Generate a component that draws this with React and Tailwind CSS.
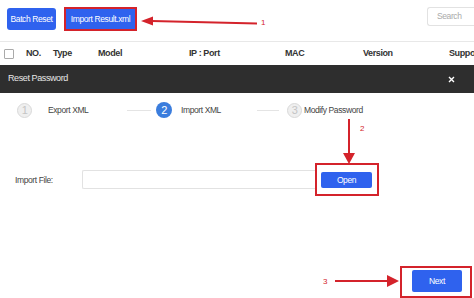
import React from 'react';

const font = { fontFamily: '"Liberation Sans", Arial, sans-serif' };

function StepCircle({ n, active }) {
    return (
        <div
            className={
                active
                    ? 'w-[16px] h-[16px] shrink-0 rounded-full bg-[#3b7ddd] text-white flex items-center justify-center text-[11px]'
                    : 'w-[15px] h-[15px] shrink-0 rounded-full bg-[#efefef] border border-[#d9d9d9] text-[#c4c4c4] flex items-center justify-center text-[11px]'
            }
        >
            {n}
        </div>
    );
}

function App() {
    const cols = [
        { label: 'NO.', w: 'w-[27px]' },
        { label: 'Type', w: 'w-[45px]' },
        { label: 'Model', w: 'w-[91px]' },
        { label: 'IP : Port', w: 'w-[96px]' },
        { label: 'MAC', w: 'w-[78px]' },
        { label: 'Version', w: 'w-[86px]' },
        { label: 'Support', w: 'w-[40px]' },
    ];

    return (
        <div className="relative w-[474px] h-[298px] overflow-hidden bg-white text-[8.5px] tracking-[-0.4px] text-[#333]" style={font}>
            {/* toolbar */}
            <div className="flex items-start h-[42px] border-b border-[#e8e8e8] pl-[7px] pt-[7px]">
                <button className="w-[49px] h-[22px] mt-[1px] rounded-[3px] bg-[#2f62ee] text-white">Batch Reset</button>
                <div className="ml-[8px] w-[73px] h-[24px] border-2 border-[#d4232b] flex">
                    <button className="flex-1 bg-[#2f62ee] text-white">Import Result.xml</button>
                </div>
                <div className="ml-auto w-[47px] h-[19px] border border-r-0 border-[#e2e2e2] rounded-l-[3px] pl-[9px] flex items-center text-[#aaa]">Search</div>
            </div>

            {/* table header */}
            <div className="flex items-center h-[23px] font-bold text-[9px] text-[#333] whitespace-nowrap overflow-hidden">
                <div className="w-[26px] shrink-0 pl-[4px]">
                    <div className="w-[10px] h-[10px] border border-[#aaa] rounded-[1px] bg-white"></div>
                </div>
                {cols.map(c => (
                    <div key={c.label} className={c.w + ' shrink-0'}>{c.label}</div>
                ))}
            </div>

            {/* dialog header */}
            <div className="flex items-center justify-between h-[28px] bg-[#2e2e2e] pl-[8px] pr-[19px]">
                <span className="text-[#e8e8e8] text-[9px]">Reset Password</span>
                <svg width="7" height="7" viewBox="0 0 7 7">
                    <path d="M1 1 L6 6 M6 1 L1 6" stroke="#fff" strokeWidth="1.4" />
                </svg>
            </div>

            {/* steps */}
            <div className="flex items-center h-[34px] pl-[17px] text-[#444] whitespace-nowrap">
                <StepCircle n="1" />
                <div className="ml-[16px] w-[79px] shrink-0">Export XML</div>
                <div className="w-[24px] h-px shrink-0 bg-[#e4e4e4]"></div>
                <div className="ml-[5px]"><StepCircle n="2" active /></div>
                <div className="ml-[9px] w-[76px] shrink-0">Import XML</div>
                <div className="w-[22px] h-px shrink-0 bg-[#e4e4e4]"></div>
                <div className="ml-[8px]"><StepCircle n="3" /></div>
                <div className="ml-[2px]">Modify Password</div>
            </div>

            {/* import file row */}
            <div className="flex items-center h-[33px] mt-[36px] text-[#444]">
                <div className="w-[82px] shrink-0 pl-[15px] pt-[2px]">Import File:</div>
                <div className="w-[233px] shrink-0 h-[19px] border border-r-0 border-[#e2e2e2] rounded-l-[2px]"></div>
                <div className="w-[64px] shrink-0 h-[33px] border-2 border-[#d4232b] flex items-center pl-[4px] pt-[1px]">
                    <button className="w-[51px] h-[16px] rounded-[2px] bg-[#2f62ee] text-white">Open</button>
                </div>
            </div>

            {/* footer */}
            <div className="flex justify-end mt-[70px] pr-[2px]">
                <div className="w-[72px] h-[32px] border-2 border-[#d4232b] pl-[10px] pt-[2px]">
                    <button className="w-[50px] h-[22px] rounded-[2px] bg-[#2f62ee] text-white">Next</button>
                </div>
            </div>

            {/* annotation arrows */}
            <svg className="absolute inset-0 pointer-events-none" width="474" height="298" viewBox="0 0 474 298">
                <line x1="152" y1="21" x2="257" y2="23.5" stroke="#d4232b" strokeWidth="2" />
                <polygon points="141,21 153,16.5 153,25.5" fill="#d4232b" />
                <text x="261" y="25" fontSize="8" fill="#d4232b" fontFamily="Liberation Sans, Arial, sans-serif">1</text>

                <line x1="349" y1="119" x2="349" y2="154" stroke="#d4232b" strokeWidth="2" />
                <polygon points="343,153 355,153 349,164" fill="#d4232b" />
                <text x="360" y="131" fontSize="8" fill="#d4232b" fontFamily="Liberation Sans, Arial, sans-serif">2</text>

                <line x1="335" y1="281" x2="389" y2="281" stroke="#d4232b" strokeWidth="2" />
                <polygon points="387,275 387,287 399,281" fill="#d4232b" />
                <text x="323" y="284" fontSize="8" fill="#d4232b" fontFamily="Liberation Sans, Arial, sans-serif">3</text>
            </svg>
        </div>
    );
}

export default App;
